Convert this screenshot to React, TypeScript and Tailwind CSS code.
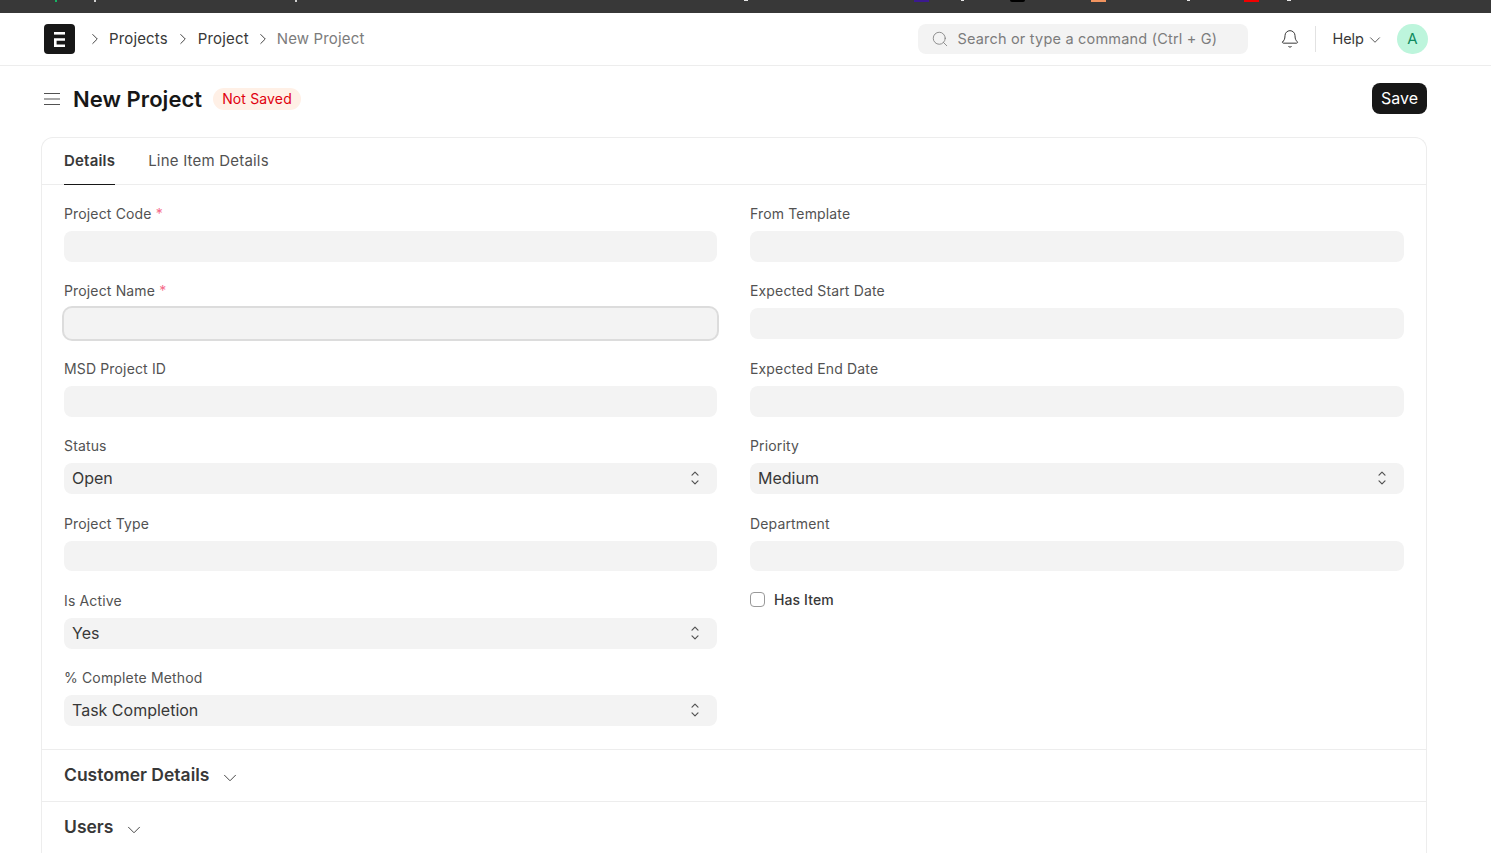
import { Bell, ChevronDown, ChevronRight, Search } from "lucide-react";

function Field({ label, required, value, select, focused }: { label?: string; required?: boolean; value?: string; select?: boolean; focused?: boolean }) {
  return (
    <div className="h-[77.4px]">
      <div className="h-[18px] text-[14px] leading-[18px] tracking-[0.15px] text-[#525252]">
        {label}
        {required && <span className="text-[#f56b8a]"> *</span>}
      </div>
      <div
        className={`mt-[8px] flex h-[30.8px] items-center justify-between rounded-[8px] bg-[#f3f3f3] pb-[1px] pl-[8px] pr-[18px] text-[16px] text-[#383838] ${
          focused ? "ring-2 ring-[#dcdcdc]" : ""
        }`}
      >
        <span>{value}</span>
        {select && (
          <svg width="8" height="14" viewBox="0 0 8 14" fill="none" stroke="#525252" strokeWidth="1.2" strokeLinecap="round" strokeLinejoin="round">
            <path d="M1 4.2 4 1.2 7 4.2" />
            <path d="M1 9.8 4 12.8 7 9.8" />
          </svg>
        )}
      </div>
    </div>
  );
}

export default function App() {
  return (
    <div className="h-[853px] w-[1491px] overflow-hidden bg-white font-['Inter',sans-serif] text-[#171717]">
      <div className="relative h-[13px] bg-[#383838]">
        <span className="absolute left-[55px] top-0 h-[2px] w-[2px] bg-[#16b364]" />
        <span className="absolute left-[94px] top-0 h-[2px] w-[2px] bg-[#cfcfcf]" />
        <span className="absolute left-[295px] top-0 h-[2px] w-[2px] bg-[#cfcfcf]" />
        <span className="absolute left-[744px] top-0 h-[1px] w-[4px] bg-[#e5e5e5]" />
        <span className="absolute left-[914px] top-0 h-[2px] w-[15px] bg-[#3b1a8f]" />
        <span className="absolute left-[961px] top-0 h-[1px] w-[3px] bg-[#e5e5e5]" />
        <span className="absolute left-[1010px] top-0 h-[2px] w-[15px] rounded-b-full bg-black" />
        <span className="absolute left-[1091px] top-0 h-[2px] w-[15px] bg-[#f0935f]" />
        <span className="absolute left-[1187px] top-0 h-[1px] w-[3px] bg-[#e5e5e5]" />
        <span className="absolute left-[1244px] top-0 h-[2px] w-[15px] bg-[#f00000]" />
        <span className="absolute left-[1287px] top-0 h-[1px] w-[4px] bg-[#e5e5e5]" />
      </div>

      <header className="flex h-[53px] items-center border-b border-[#ededed] pl-[44px] pr-[63px]">
        <div className="flex h-[30px] w-[31px] items-center justify-center rounded-[4px] bg-[#171717]">
          <svg width="11" height="15" viewBox="0 0 11 15" fill="none" stroke="white" strokeWidth="2.6">
            <path d="M0 1.3H11" />
            <path d="M11 7.5H1.3V13.7H11" />
          </svg>
        </div>
        <nav className="ml-[11px] flex items-center text-[15px] tracking-[0.15px] text-[#383838]">
          <ChevronRight size={18} strokeWidth={1.25} className="mr-[5px]" />
          <span>Projects</span>
          <ChevronRight size={18} strokeWidth={1.25} className="mx-[6px]" />
          <span>Project</span>
          <ChevronRight size={18} strokeWidth={1.25} className="mx-[5px]" />
          <span className="text-[#7c7c7c]">New Project</span>
        </nav>
        <div className="ml-auto flex h-[30px] w-[330px] items-center rounded-[8px] bg-[#f3f3f3] pl-[13px] text-[14.5px] tracking-[0.2px] text-[#7c7c7c]">
          <Search size={18} strokeWidth={1.1} className="mr-[8px]" />
          Search or type a command (Ctrl + G)
        </div>
        <Bell size={20} strokeWidth={1.2} className="ml-[32px] text-[#383838]" />
        <div className="ml-[15px] h-[26px] w-px bg-[#e2e2e2]" />
        <div className="ml-[16px] flex items-center text-[14.5px] text-[#383838]">
          Help
          <ChevronDown size={18} strokeWidth={1.1} className="ml-[2px] mt-[2px]" />
        </div>
        <div className="ml-[13px] flex h-[30px] w-[31px] items-center justify-center rounded-full bg-[#bdf5dc] text-[15px] text-[#0f8a5f]">A</div>
      </header>

      <div className="mb-[6px] flex h-[65px] items-center pl-[44px] pr-[64px]">
        <svg width="16" height="14" viewBox="0 0 16 14" stroke="#525252" strokeWidth="1.1">
          <path d="M0 1.5H16M0 7H16M0 12.5H16" />
        </svg>
        <h1 className="ml-[13px] mt-[2px] text-[22px] font-semibold tracking-[0.05px] text-[#171717]">New Project</h1>
        <span className="ml-[11px] flex h-[22px] items-center rounded-full bg-[#fff0e6] px-[9px] text-[14px] tracking-[0.15px] text-[#e0000f]">Not Saved</span>
        <button className="ml-auto h-[31px] w-[55px] rounded-[8px] bg-[#171717] pb-[1px] text-[16px] text-white">Save</button>
      </div>

      <main className="ml-[41px] h-[800px] w-[1386px] rounded-t-[12px] border border-b-0 border-[#ededed]">
        <div className="flex h-[47px] border-b border-[#ededed] pl-[22px] text-[15px] tracking-[0.2px]">
          <div className="flex h-[47px] items-center border-b border-[#171717] font-semibold text-[#383838]">Details</div>
          <div className="ml-[33px] flex h-[47px] items-center text-[#525252]">Line Item Details</div>
        </div>

        <div className="grid h-[564px] grid-cols-[653px_654px] gap-x-[33px] px-[22px] pt-[20px]">
          <div>
            <Field label="Project Code" required />
            <Field label="Project Name" required focused />
            <Field label="MSD Project ID" />
            <Field label="Status" value="Open" select />
            <Field label="Project Type" />
            <Field label="Is Active" value="Yes" select />
            <Field label="% Complete Method" value="Task Completion" select />
          </div>
          <div>
            <Field label="From Template" />
            <Field label="Expected Start Date" />
            <Field label="Expected End Date" />
            <Field label="Priority" value="Medium" select />
            <Field label="Department" />
            <label className="-mt-[1px] flex h-[18px] items-center text-[14px] font-medium tracking-[0.1px] text-[#383838]">
              <span className="mr-[9px] h-[15px] w-[15px] rounded-[4px] border border-[#999999] bg-white" />
              Has Item
            </label>
          </div>
        </div>

        <div className="flex h-[52px] items-center border-t border-[#ededed] pl-[22px] text-[17.5px] font-semibold text-[#383838]">
          Customer Details
          <ChevronDown size={22} strokeWidth={1} className="ml-[10px] mt-[4px]" />
        </div>
        <div className="flex h-[52px] items-center border-t border-[#ededed] pl-[22px] text-[17.5px] font-semibold text-[#383838]">
          Users
          <ChevronDown size={22} strokeWidth={1} className="ml-[10px] mt-[4px]" />
        </div>
      </main>
    </div>
  );
}
